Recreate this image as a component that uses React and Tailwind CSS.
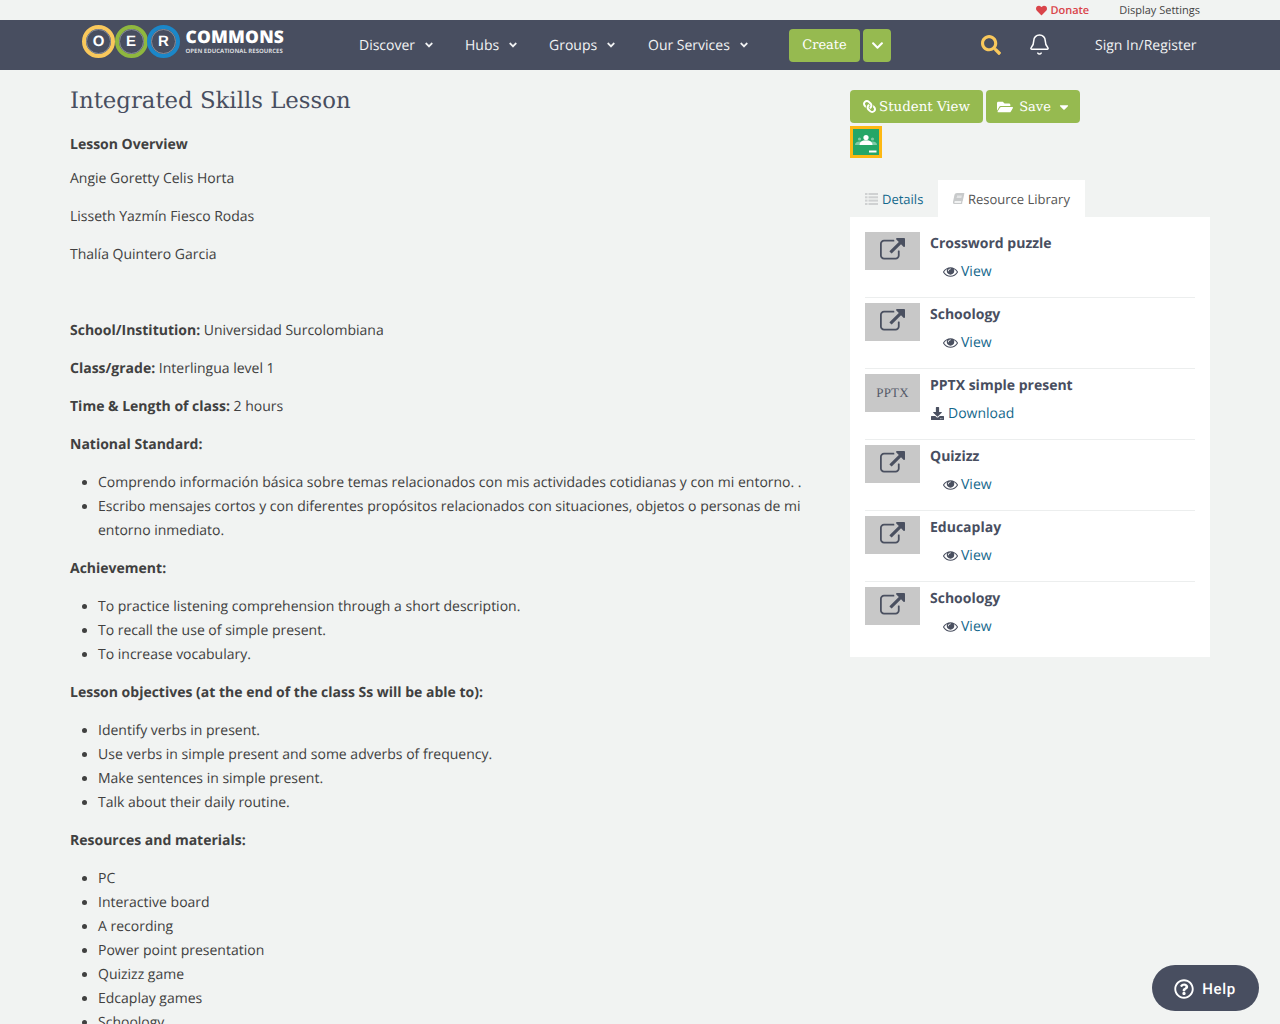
import React from "react";
import { FaHeart, FaSearch, FaLink, FaFolderOpen, FaCaretDown, FaBook, FaDownload, FaAngleDown, FaChevronDown, FaRegQuestionCircle } from "react-icons/fa";
import { Bell } from "lucide-react";

const sans = { fontFamily: '"Open Sans", sans-serif' };

function ExtLink() {
  return (
    <svg viewBox="0 0 1792 1792" className="w-[25px] h-[25px] mb-[1px] fill-[#4a5060]">
      <path d="M1408 928v320q0 119-84.5 203.5t-203.5 84.5h-832q-119 0-203.5-84.5t-84.5-203.5v-832q0-119 84.5-203.5t203.5-84.5h704q14 0 23 9t9 23v64q0 14-9 23t-23 9h-704q-66 0-113 47t-47 113v832q0 66 47 113t113 47h832q66 0 113-47t47-113v-320q0-14 9-23t23-9h64q14 0 23 9t9 23zm384-864v512q0 26-19 45t-45 19-45-19l-176-176-652 652q-10 10-23 10t-23-10l-114-114q-10-10-10-23t10-23l652-652-176-176q-19-19-19-45t19-45 45-19h512q26 0 45 19t19 45z" />
    </svg>
  );
}

function Eye() {
  return (
    <svg viewBox="0 0 1792 1792" className="w-[15px] h-[15px] mr-[3px] -translate-y-[1px] fill-[#4a5060]">
      <path d="M1664 960q-152-236-381-353 61 104 61 225 0 185-131.5 316.5t-316.5 131.5-316.5-131.5-131.5-316.5q0-121 61-225-229 117-381 353 133 205 333.5 326.5t434.5 121.5 434.5-121.5 333.5-326.5zm-720-384q0-20-14-34t-34-14q-125 0-214.5 89.5t-89.5 214.5q0 20 14 34t34 14 34-14 14-34q0-86 61-147t147-61q20 0 34-14t14-34zm848 384q0 34-20 69-140 230-376.5 368.5t-499.5 138.5-499.5-139-376.5-368q-20-35-20-69t20-69q140-229 376.5-368t499.5-139 499.5 139 376.5 368q20 35 20 69z" />
    </svg>
  );
}

function ListIcon() {
  return (
    <svg viewBox="0 0 13 12" className="w-[13px] h-[12px] mr-[4px] fill-[#cfd1d2]">
      <rect x="0" y="0" width="2.5" height="2" /><rect x="3.5" y="0" width="9.5" height="2" />
      <rect x="0" y="3.3" width="2.5" height="2" /><rect x="3.5" y="3.3" width="9.5" height="2" />
      <rect x="0" y="6.6" width="2.5" height="2" /><rect x="3.5" y="6.6" width="9.5" height="2" />
      <rect x="0" y="10" width="2.5" height="2" /><rect x="3.5" y="10" width="9.5" height="2" />
    </svg>
  );
}

function Ring({ c, l }) {
  return (
    <div className={`w-[33px] h-[33px] -mr-[0.5px] rounded-full border-[4px] ${c} flex items-center justify-center bg-[#484e60]`}>
      <div className="w-[25px] h-[25px] rounded-full border border-[#8a8e9a] flex items-center justify-center">
        <span className="text-white font-bold text-[15px] leading-none font-['Liberation_Sans',sans-serif]">{l}</span>
      </div>
    </div>
  );
}

function NavItem({ t, w }) {
  return (
    <div className={`flex items-center ${w} text-[14px] text-[#f2f3f4]`}>
      <span className="pt-[2px]">{t}</span>
      <FaAngleDown className="ml-[8px] w-[12px] h-[12px]" />
    </div>
  );
}

function Resource({ thumb, title, action, last }) {
  return (
    <div className={`flex ${last ? "h-[66px]" : "h-[66px] border-b border-[#eceeee]"} mb-[5px]`}>
      <div className="w-[55px] h-[38px] bg-[#c8c8c8] flex items-center justify-center shrink-0">
        {thumb === "PPTX" ? (
          <span className="text-[13px] text-[#555a68] font-['Liberation_Serif',serif] tracking-[0.2px]">PPTX</span>
        ) : (
          <ExtLink />
        )}
      </div>
      <div className="ml-[10px] pt-[2px]">
        <div className="text-[14px] font-bold text-[#484e60] leading-[20px]">{title}</div>
        {action === "Download" ? (
          <div className="flex items-center mt-[8px] ml-[1px] leading-[20px] text-[14px] text-[#14688c]">
            <FaDownload className="w-[13px] h-[13px] text-[#4a5060] mr-[4px] -translate-y-[1px]" />
            <span>Download</span>
          </div>
        ) : (
          <div className="flex items-center mt-[8px] ml-[13px] leading-[20px] text-[14px] text-[#14688c]">
            <Eye />
            <span>View</span>
          </div>
        )}
      </div>
    </div>
  );
}

function P({ children }) {
  return <p className="mb-[14px]">{children}</p>;
}
function UL({ items }) {
  return (
    <ul className="list-disc pl-[28px] mb-[14px]">
      {items.map((i) => (
        <li key={i}>{i}</li>
      ))}
    </ul>
  );
}

export default function App() {
  return (
    <div className="relative h-[1024px] overflow-hidden bg-[#f1f3f2] text-[#404040] text-[14px] leading-[24px] [text-rendering:geometricPrecision]" style={sans}>
      <div className="h-[20px] flex items-center justify-end pr-[80px] text-[11px] leading-[20px]">
        <span className="flex items-center text-[#d9444a] font-semibold mr-[30px]">
          <FaHeart className="w-[11px] h-[11px] mr-[3px]" />
          <span className="pt-[2px]">Donate</span>
        </span>
        <span className="text-[#444] pt-[2px]">Display Settings</span>
      </div>

      <header className="h-[50px] bg-[#484e60] flex items-center relative">
        <div className="flex items-center ml-[82px] w-[277px] mb-[7px]">
          <Ring c="border-[#f9c85c]" l="O" />
          <Ring c="border-[#8fb73f]" l="E" />
          <Ring c="border-[#1b87c9]" l="R" />
          <div className="ml-[6px] flex flex-col">
            <span className="text-white font-extrabold text-[17.4px] leading-[17px] tracking-[0.2px]">COMMONS</span>
            <span className="text-[#d8dade] font-bold text-[6px] leading-[8px] mt-[1px] whitespace-nowrap">OPEN EDUCATIONAL RESOURCES</span>
          </div>
        </div>
        <NavItem t="Discover" w="w-[106px]" />
        <NavItem t="Hubs" w="w-[84px]" />
        <NavItem t="Groups" w="w-[99px]" />
        <NavItem t="Our Services" w="w-[141px]" />
        <div className="h-[33px] w-[71px] pt-[2px] rounded-[4px] bg-[#96ba50] text-white flex items-center justify-center font-['DejaVu_Serif',serif] text-[13px]">Create</div>
        <div className="h-[33px] w-[28px] ml-[3px] rounded-[4px] bg-[#96ba50] text-white flex items-center justify-center">
          <FaChevronDown className="w-[13px] h-[13px]" />
        </div>
        <FaSearch className="ml-[90px] w-[20px] h-[20px] text-[#f9c85c]" />
        <Bell className="ml-[27px] w-[23px] h-[23px] -translate-y-[1px] text-white" strokeWidth={1.6} />
        <span className="ml-[44px] pt-[2px] text-[14px] text-[#f2f3f4]">Sign In/Register</span>
      </header>

      <div className="flex pl-[70px]">
        <main className="w-[780px] pr-[30px]">
          <h1 className="mt-[16px] mb-[17px] text-[22.8px] leading-[30px] text-[#484e60] font-['DejaVu_Serif',serif]">Integrated Skills Lesson</h1>
          <p className="font-bold mb-[10px]">Lesson Overview</p>
          <P>Angie Goretty Celis Horta</P>
          <P>Lisseth Yazmín Fiesco Rodas</P>
          <P>Thalía Quintero Garcia</P>
          <P>&nbsp;</P>
          <P><b>School/Institution:</b> Universidad Surcolombiana</P>
          <P><b>Class/grade:</b> Interlingua level 1</P>
          <P><b>Time &amp; Length of class:</b> 2 hours</P>
          <P><b>National Standard:</b></P>
          <UL items={["Comprendo información básica sobre temas relacionados con mis actividades cotidianas y con mi entorno. .", "Escribo mensajes cortos y con diferentes propósitos relacionados con situaciones, objetos o personas de mi entorno inmediato."]} />
          <P><b>Achievement:</b></P>
          <UL items={["To practice listening comprehension through a short description.", "To recall the use of simple present.", "To increase vocabulary."]} />
          <P><b>Lesson objectives (at the end of the class Ss will be able to):</b></P>
          <UL items={["Identify verbs in present.", "Use verbs in simple present and some adverbs of frequency.", "Make sentences in simple present.", "Talk about their daily routine."]} />
          <P><b>Resources and materials:</b></P>
          <UL items={["PC", "Interactive board", "A recording", "Power point presentation", "Quizizz game", "Edcaplay games", "Schoology"]} />
        </main>

        <aside className="w-[360px] pt-[20px]">
          <div className="flex">
            <div className="h-[33px] w-[133px] rounded-[4px] bg-[#96ba50] text-white flex items-center justify-center text-[13.4px] font-['DejaVu_Serif',serif]">
              <FaLink className="w-[13px] h-[13px] mr-[3px] -scale-x-100" /><span className="pt-[2px]">Student View</span>
            </div>
            <div className="h-[33px] w-[94px] ml-[3px] pl-[2px] rounded-[4px] bg-[#96ba50] text-white flex items-center justify-center text-[13px] font-['DejaVu_Serif',serif]">
              <FaFolderOpen className="w-[16px] h-[16px] mr-[6px]" /><span className="pt-[2px]">Save</span><FaCaretDown className="w-[14px] h-[14px] ml-[6px]" />
            </div>
          </div>
          <div className="mt-[3px] w-[32px] h-[32px] border-[3px] border-[#fdb813] bg-[#25a667]">
            <svg viewBox="0 0 26 26" className="w-[26px] h-[26px]">
              <circle cx="6.5" cy="10" r="1.6" fill="#7fcba6" />
              <circle cx="19.5" cy="10" r="1.6" fill="#7fcba6" />
              <path d="M2 16 q0-3.5 4.5-3.5 t4.5 3.5z M15 16 q0-3.5 4.5-3.5 t4.5 3.5z" fill="#7fcba6" />
              <circle cx="13" cy="8.5" r="2.6" fill="#fff" />
              <path d="M6.5 16 q0-4.8 6.5-4.8 t6.5 4.8z" fill="#fff" />
              <rect x="16" y="21.5" width="7.5" height="2" fill="#fff" />
            </svg>
          </div>
          <div className="flex mt-[22px] h-[37px] text-[13px]">
            <div className="w-[88px] flex items-center pl-[15px] text-[#14688c]">
              <ListIcon />Details
            </div>
            <div className="w-[147px] bg-white flex items-center pl-[15px] text-[#555]">
              <FaBook className="w-[11px] h-[11px] text-[#c8cacb] mr-[4px] -skew-x-12" />Resource Library
            </div>
          </div>
          <div className="bg-white px-[15px] pt-[15px] h-[440px]">
            <Resource title="Crossword puzzle" action="View" />
            <Resource title="Schoology" action="View" />
            <Resource thumb="PPTX" title="PPTX simple present" action="Download" />
            <Resource title="Quizizz" action="View" />
            <Resource title="Educaplay" action="View" />
            <Resource title="Schoology" action="View" last />
          </div>
        </aside>
      </div>

      <div className="absolute left-[1152px] top-[965px] w-[107px] h-[46px] rounded-full bg-[#484e60] text-white flex items-center justify-center pt-[1px] font-['Roboto',sans-serif] font-medium text-[15px] tracking-[0.7px]">
        <FaRegQuestionCircle className="w-[20px] h-[20px] mr-[8px] -ml-[1px]" />Help
      </div>
    </div>
  );
}
